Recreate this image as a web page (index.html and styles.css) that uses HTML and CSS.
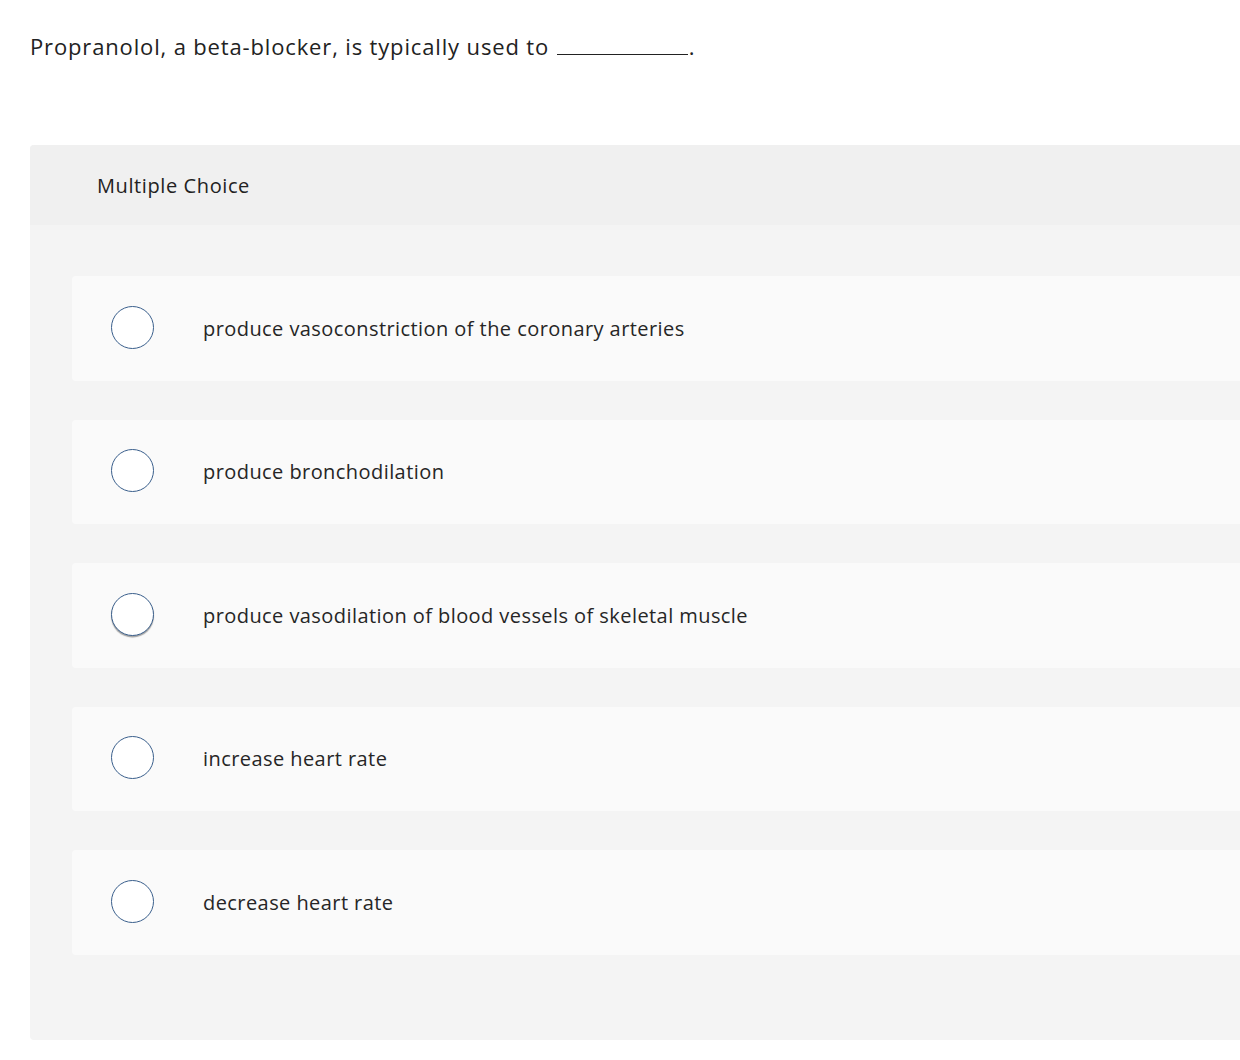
FILE: index.html
```html
<!DOCTYPE html>
<html>
<head>
<meta charset="utf-8">
<link rel="stylesheet" href="styles.css">
</head>
<body>
<div class="page">
  <p class="question">Propranolol, a beta-blocker, is typically used to <span class="blank"></span>.</p>
  <section class="panel">
    <header class="panel-head">Multiple Choice</header>
    <div class="panel-body">
      <label class="choice"><span class="radio"></span><span class="choice-text">produce vasoconstriction of the coronary arteries</span></label>
      <label class="choice"><span class="radio"></span><span class="choice-text">produce bronchodilation</span></label>
      <label class="choice"><span class="radio radio-shadow"></span><span class="choice-text">produce vasodilation of blood vessels of skeletal muscle</span></label>
      <label class="choice"><span class="radio"></span><span class="choice-text">increase heart rate</span></label>
      <label class="choice"><span class="radio"></span><span class="choice-text">decrease heart rate</span></label>
    </div>
  </section>
</div>
</body>
</html>
```
FILE: styles.css
```css
html, body {
  margin: 0;
  padding: 0;
  background: #ffffff;
  overflow: hidden;
}
body {
  font-family: "Open Sans", "Lato", sans-serif;
  color: #262626;
}
.page {
  padding: 29px 0 0 30px;
}
.question {
  margin: 0;
  font-size: 22px;
  letter-spacing: 0.85px;
  line-height: 34px;
  color: #222;
}
.blank {
  display: inline-block;
  width: 131px;
  border-bottom: 1.5px solid #222;
  margin-left: 1px;
  margin-right: 1px;
  vertical-align: baseline;
}
.panel {
  margin-top: 82px;
  width: 1260px;
  border-radius: 4px;
  background: #f4f4f4;
  overflow: hidden;
}
.panel-head {
  height: 80px;
  background: #f0f0f0;
  display: flex;
  align-items: center;
  padding-left: 67px;
  font-size: 20px;
  letter-spacing: 0.6px;
  color: #222;
}
.panel-body {
  padding: 51px 0 85.5px 42px;
  display: flex;
  flex-direction: column;
  gap: 39px;
}
.choice {
  height: 104.5px;
  background: #fafafa;
  border-radius: 4px;
  display: flex;
  align-items: center;
  padding-left: 39px;
}
.radio {
  width: 41px;
  height: 41px;
  border: 1.5px solid #3a5f8c;
  border-radius: 50%;
  background: #fff;
  flex: none;
  margin-top: -2px;
}
.radio-shadow {
  box-shadow: 0 1.5px 1px rgba(0,0,0,0.35);
}
.choice-text {
  margin-left: 49px;
  font-size: 20px;
  letter-spacing: 0.43px;
  color: #262626;
}
```
